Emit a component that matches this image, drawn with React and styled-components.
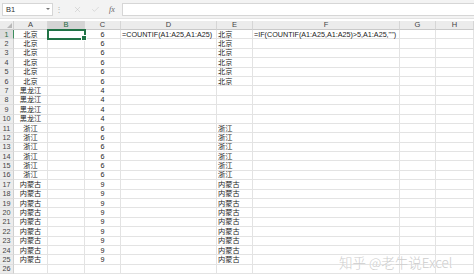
import React from "react";
import styled, { createGlobalStyle } from "styled-components";
import { X, Check } from "lucide-react";

const GlobalStyle = createGlobalStyle`
  html, body {
    margin: 0;
    padding: 0;
    background: #ffffff;
  }
  body {
    width: 474px;
    height: 276px;
    overflow: hidden;
    font-family: "Liberation Sans", "Noto Sans CJK SC", sans-serif;
  }
`;

const Page = styled.div`
  position: relative;
  width: 474px;
  height: 276px;
  overflow: hidden;
  background: #fff;
`;

const FormulaBar = styled.div`
  display: flex;
  align-items: center;
  height: 19px;
  padding: 0 0 0 2px;
  background: #f3f3f3;
  border-bottom: 1px solid #e2e2e2;
  box-sizing: border-box;
`;

const NameBox = styled.div`
  display: flex;
  align-items: center;
  justify-content: space-between;
  width: 51px;
  height: 13px;
  padding: 0 2px 0 3px;
  box-sizing: border-box;
  background: #fff;
  border: 1px solid #d6d6d6;
  font-size: 7.5px;
  color: #333;
`;

const Caret = styled.span`
  width: 0;
  height: 0;
  border-left: 2px solid transparent;
  border-right: 2px solid transparent;
  border-top: 2.5px solid #777;
`;

const Dots = styled.span`
  width: 12px;
  text-align: center;
  font-size: 8px;
  color: #b0b0b0;
`;

const ToolIcons = styled.div`
  display: flex;
  align-items: center;
  gap: 9px;
  padding: 0 7px 0 8px;
  color: #bdbdbd;
`;

const Fx = styled.span`
  font-family: "Liberation Serif", serif;
  font-style: italic;
  font-size: 8px;
  color: #666;
`;

const FormulaInput = styled.div`
  flex: 1;
  height: 13px;
  background: #fff;
  border: 1px solid #d6d6d6;
  border-right: none;
  box-sizing: border-box;
`;

const Gap = styled.div`
  height: 2px;
  background: #fff;
`;

const Sheet = styled.div`
  display: grid;
  grid-template-columns: 14px 34px 37px 36px 96px 36px 147px 36px 1fr;
  grid-template-rows: 9px;
  grid-auto-rows: 9.4px;
  font-size: 7.2px;
  color: #222;
`;

const Corner = styled.div`
  position: relative;
  background: #ececec;
  border-right: 1px solid #cfcfcf;
  border-bottom: 1px solid #c9c9c9;
  &::after {
    content: "";
    position: absolute;
    right: 1px;
    bottom: 1px;
    border-left: 5px solid transparent;
    border-bottom: 5px solid #b8b8b8;
  }
`;

const ColHead = styled.div`
  display: flex;
  align-items: center;
  justify-content: center;
  background: ${p => (p.$active ? "#d4d4d4" : "#ececec")};
  color: ${p => (p.$active ? "#1d6b40" : "#444")};
  border-right: 1px solid #d6d6d6;
  border-bottom: 1px solid ${p => (p.$active ? "#3e8e5f" : "#c9c9c9")};
  font-size: 7.5px;
  line-height: 1;
  box-sizing: border-box;
`;

const RowHead = styled.div`
  display: flex;
  align-items: center;
  justify-content: center;
  background: ${p => (p.$active ? "#dcdcdc" : "#ececec")};
  color: ${p => (p.$active ? "#1d6b40" : "#444")};
  border-right: 1px solid ${p => (p.$active ? "#3e8e5f" : "#cfcfcf")};
  border-bottom: 1px solid #dedede;
  font-size: 7.2px;
  line-height: 1;
  box-sizing: border-box;
`;

const Cell = styled.div`
  position: relative;
  display: flex;
  align-items: center;
  justify-content: ${p => (p.$align === "center" ? "center" : "flex-start")};
  padding: ${p => (p.$align === "center" ? "0" : "0 1px")};
  border-right: 1px solid #e3e3e3;
  border-bottom: 1px solid #e3e3e3;
  white-space: nowrap;
  line-height: 1;
  box-sizing: border-box;
  min-width: 0;
  z-index: ${p => (p.$selected ? 2 : 0)};
  ${p =>
    p.$selected &&
    `
    outline: 2px solid #217346;
    outline-offset: -1px;
    &::after {
      content: "";
      position: absolute;
      right: -3px;
      bottom: -3px;
      width: 4px;
      height: 4px;
      background: #217346;
      border: 1px solid #fff;
    }
  `}
`;

const Watermark = styled.div`
  position: absolute;
  left: 339px;
  top: 252px;
  font-family: "Noto Sans CJK SC", "Liberation Sans", sans-serif;
  font-size: 13.5px;
  font-weight: 300;
  color: #cdcdcd;
  white-space: nowrap;
  text-shadow: 0 0 1px #fff;
`;

const columns = ["A", "B", "C", "D", "E", "F", "G", "H"];

const groups = [
  { city: "北京", n: 6 },
  { city: "黑龙江", n: 4 },
  { city: "浙江", n: 6 },
  { city: "内蒙古", n: 9 }
];

const cities = groups.flatMap(g => Array(g.n).fill(g.city));
const countOf = city => cities.filter(c => c === city).length;

const rows = cities.map((city, i) => ({
  A: city,
  C: String(countOf(city)),
  D: i === 0 ? "=COUNTIF(A1:A25,A1:A25)" : "",
  E: countOf(city) > 5 ? city : "",
  F: i === 0 ? '=IF(COUNTIF(A1:A25,A1:A25)>5,A1:A25,"")' : ""
}));
rows.push({});

const align = { A: "center", C: "center" };

const App = () => (
  <Page>
    <GlobalStyle />
    <FormulaBar>
      <NameBox>
        <span>B1</span>
        <Caret />
      </NameBox>
      <Dots>⋮</Dots>
      <ToolIcons>
        <X size={9} strokeWidth={1.2} />
        <Check size={9} strokeWidth={1.2} />
        <Fx>fx</Fx>
      </ToolIcons>
      <FormulaInput />
    </FormulaBar>
    <Gap />
    <Sheet>
      <Corner />
      {columns.map(c => (
        <ColHead key={c} $active={c === "B"}>
          {c}
        </ColHead>
      ))}
      {rows.map((row, i) => (
        <React.Fragment key={i}>
          <RowHead $active={i === 0}>{i + 1}</RowHead>
          {columns.map(c => (
            <Cell key={c} $align={align[c] || "left"} $selected={i === 0 && c === "B"}>
              {row[c] || ""}
            </Cell>
          ))}
        </React.Fragment>
      ))}
    </Sheet>
    <Watermark>知乎 @老牛说Excel</Watermark>
  </Page>
);

export default App;
